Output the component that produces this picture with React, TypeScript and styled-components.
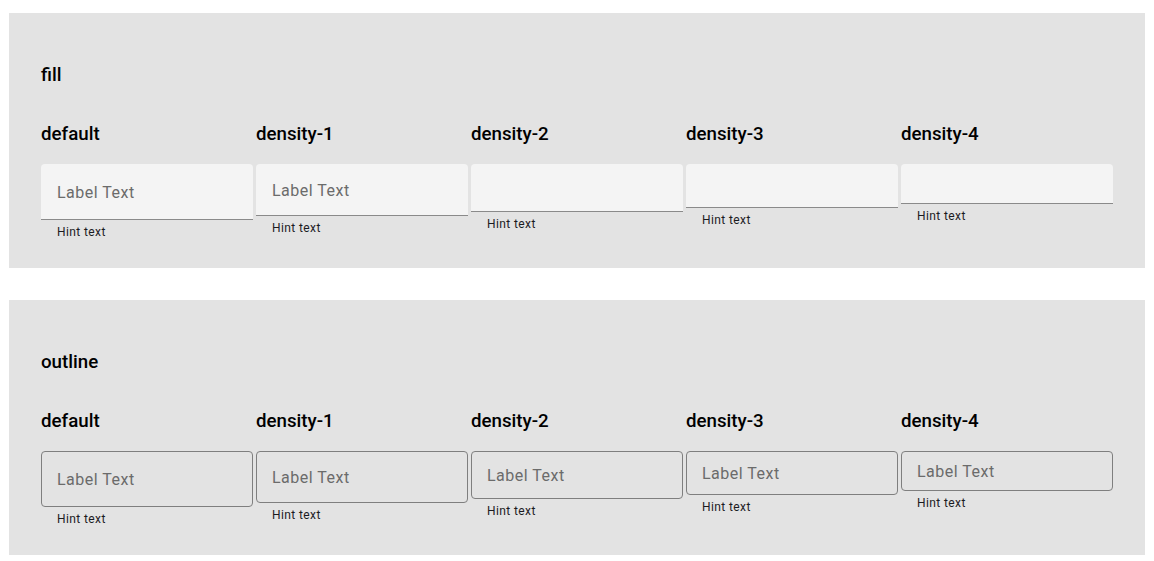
import React from 'react';
import styled, { createGlobalStyle } from 'styled-components';

const GlobalStyle = createGlobalStyle`
  body {
    margin: 0;
    background: #ffffff;
    font-family: Roboto, "Liberation Sans", sans-serif;
  }
`;

type Appearance = 'fill' | 'outline';

const DENSITIES = [
  { title: 'default', height: 56 },
  { title: 'density-1', height: 52 },
  { title: 'density-2', height: 48 },
  { title: 'density-3', height: 44 },
  { title: 'density-4', height: 40 },
];

const Page = styled.div`
  display: flex;
  flex-direction: column;
  gap: 32px;
  padding: 13px 9px;
`;

const Panel = styled.section`
  background: #e3e3e3;
  padding: 32px 32px 28px;
`;

const SectionTitle = styled.h3`
  margin: 19px 0 18px;
  font-size: 18.72px;
  line-height: 22px;
  font-weight: 500;
  color: #000;
`;

const Row = styled.div`
  display: flex;
  gap: 3px;
`;

const Column = styled.div`
  width: 212px;
  display: flex;
  flex-direction: column;
`;

const ColumnTitle = styled.h3`
  margin: 19px 0 19px;
  font-size: 18.72px;
  line-height: 22px;
  font-weight: 500;
  color: #000;
`;

const Field = styled.div<{ $appearance: Appearance; $height: number }>`
  box-sizing: border-box;
  height: ${(p) => p.$height}px;
  display: flex;
  align-items: center;
  ${(p) =>
    p.$appearance === 'fill'
      ? `
    padding: 1px 16px 0;
    background: #f4f4f4;
    border-radius: 4px 4px 0 0;
    border-bottom: 1px solid #8a8a8a;
  `
      : `
    padding: 0 15px;
    border: 1px solid #7f7f7f;
    border-radius: 4px;
  `}
`;

const Label = styled.span`
  font-size: 16px;
  letter-spacing: 0.5px;
  color: #6b6b6b;
`;

const Hint = styled.div`
  padding: 4px 16px 0;
  font-size: 12px;
  line-height: 16px;
  letter-spacing: 0.4px;
  color: #1c1b1f;
`;

// fill fields drop their floating label once density gets too tight
const showLabel = (appearance: Appearance, height: number) =>
  appearance === 'outline' || height >= 52;

const FieldSection = ({ appearance }: { appearance: Appearance }) => (
  <Panel>
    <SectionTitle>{appearance}</SectionTitle>
    <Row>
      {DENSITIES.map((d) => (
        <Column key={d.title}>
          <ColumnTitle>{d.title}</ColumnTitle>
          <Field $appearance={appearance} $height={d.height}>
            {showLabel(appearance, d.height) && <Label>Label Text</Label>}
          </Field>
          <Hint>Hint text</Hint>
        </Column>
      ))}
    </Row>
  </Panel>
);

export default function App() {
  return (
    <>
      <GlobalStyle />
      <Page>
        <FieldSection appearance="fill" />
        <FieldSection appearance="outline" />
      </Page>
    </>
  );
}
